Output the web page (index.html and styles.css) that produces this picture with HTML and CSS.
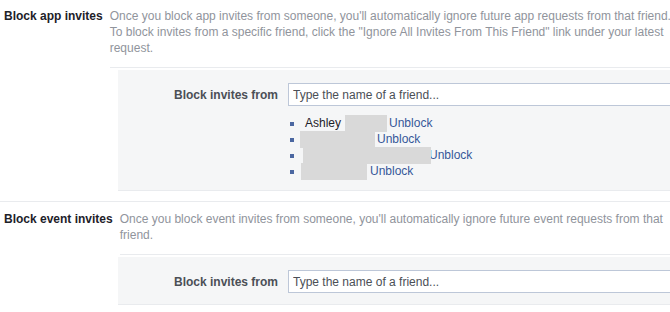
FILE: index.html
```html
<!DOCTYPE html>
<html lang="en">
<head>
    <meta charset="UTF-8">
    <meta name="viewport" content="width=device-width, initial-scale=1.0">
    <title>Blocking - Settings</title>
    <link rel="stylesheet" href="styles.css">
</head>
<body>
    <div class="settings">
        <!-- App invites -->
        <section class="setting">
            <div class="setting-head">
                <h3 class="setting-label">Block app invites</h3>
                <p class="setting-desc">Once you block app invites from someone, you'll automatically ignore future app requests from that friend. To block invites from a specific friend, click the "Ignore All Invites From This Friend" link under your latest request.</p>
            </div>
            <div class="setting-panel">
                <div class="block-row">
                    <label class="block-label" for="appFriend">Block invites from</label>
                    <input type="text" id="appFriend" class="friend-input" placeholder="Type the name of a friend...">
                </div>
                <ul class="blocked-list">
                    <li class="blocked-item">
                        <span class="friend-name">Ashley</span>
                        <span class="redacted redacted-1"></span>
                        <a href="#" class="unblock">Unblock</a>
                    </li>
                    <li class="blocked-item">
                        <span class="redacted redacted-2"></span>
                        <a href="#" class="unblock">Unblock</a>
                    </li>
                    <li class="blocked-item">
                        <span class="redacted redacted-3"></span>
                        <a href="#" class="unblock">Unblock</a>
                    </li>
                    <li class="blocked-item">
                        <span class="redacted redacted-4"></span>
                        <a href="#" class="unblock">Unblock</a>
                    </li>
                </ul>
            </div>
        </section>

        <!-- Event invites -->
        <section class="setting">
            <div class="setting-head">
                <h3 class="setting-label">Block event invites</h3>
                <p class="setting-desc">Once you block event invites from someone, you'll automatically ignore future event requests from that friend.</p>
            </div>
            <div class="setting-panel">
                <div class="block-row">
                    <label class="block-label" for="eventFriend">Block invites from</label>
                    <input type="text" id="eventFriend" class="friend-input" placeholder="Type the name of a friend...">
                </div>
            </div>
        </section>
    </div>
</body>
</html>
```

FILE: styles.css
```css
* {
    margin: 0;
    padding: 0;
    box-sizing: border-box;
}

html, body {
    overflow: hidden;
}

body {
    font-family: "Liberation Sans", Arial, Helvetica, sans-serif;
    font-size: 12px;
    line-height: 16px;
    background: #fff;
    color: #1d2129;
}

.settings {
    width: 760px;
}

.setting {
    padding-top: 8px;
    padding-bottom: 10px;
    border-bottom: 1px solid #e9ebee;
}

.setting + .setting {
    padding-top: 9px;
}

.setting-head {
    display: flex;
    width: 682px;
}

.setting-label {
    font-size: 12px;
    font-weight: bold;
    color: #1d2129;
    white-space: nowrap;
    padding: 0 7px 0 4px;
}

.setting-desc {
    flex: 1;
    color: #90949c;
    padding-bottom: 11px;
    border-bottom: 1px solid #e9ebee;
}

.setting-panel {
    margin: 2px 0 0 118px;
    padding: 13px 0 11px;
    background: #f5f6f7;
    border-bottom: 1px solid #e9ebee;
}

.block-row {
    display: flex;
    align-items: center;
    gap: 10px;
}

.block-label {
    width: 160px;
    text-align: right;
    font-weight: bold;
    color: #4b4f56;
}

.friend-input {
    width: 440px;
    height: 23px;
    padding: 0 4px;
    border: 1px solid #bdc7d8;
    background: #fff;
    font-family: inherit;
    font-size: 12px;
    color: #1d2129;
    outline: none;
}

.friend-input::placeholder {
    color: #4b4f56;
    opacity: 1;
}

.blocked-list {
    list-style: none;
    margin: 9px 0 0 170px;
}

.blocked-item {
    position: relative;
    display: flex;
    align-items: center;
    height: 16px;
    padding-left: 12px;
}

.blocked-item::before {
    content: "";
    position: absolute;
    left: 2px;
    top: 7px;
    width: 4px;
    height: 4px;
    background: #4b67a1;
}

.friend-name {
    margin-left: 5px;
    color: #1d2129;
}

.redacted {
    display: inline-block;
    height: 17px;
    background: #d9d9d9;
    filter: blur(0.6px);
}

.redacted-1 { width: 42px; margin-left: 4px; }
.redacted-2 { width: 75px; }
.redacted-3 { width: 128px; margin-left: 3px; }
.redacted-4 { width: 66px; margin-left: 1px; }

.unblock {
    margin-left: 2px;
    color: #365899;
    text-decoration: none;
}

.redacted-3 + .unblock {
    margin-left: -2px;
}

.redacted-4 + .unblock {
    margin-left: 3px;
}

.unblock:hover {
    text-decoration: underline;
}
```
